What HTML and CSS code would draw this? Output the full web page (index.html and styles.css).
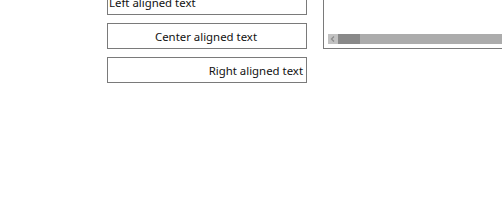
FILE: index.html
```html
<!DOCTYPE html>
<html>
<head>
<meta charset="UTF-8">
<title>Text alignment</title>
<link rel="stylesheet" href="styles.css">
</head>
<body>
<div class="page">
	<div class="fields">
		<div class="field field-left">Left aligned text</div>
		<div class="field field-center">Center aligned text</div>
		<div class="field field-right">Right aligned text</div>
	</div>
	<div class="panel">
		<div class="panel-body"></div>
		<div class="hscroll">
			<span class="hscroll-btn">
				<svg width="10" height="10" viewBox="0 0 10 10"><path d="M6 2.5 L3.5 5 L6 7.5" fill="none" stroke="#8c8c8c" stroke-width="1.3"/></svg>
			</span>
			<span class="hscroll-thumb"></span>
			<span class="hscroll-track"></span>
		</div>
	</div>
</div>
</body>
</html>
```

FILE: styles.css
```css
html,body{margin:0;padding:0;}
html,body{
	width:100%;
	height:100%;
	overflow:hidden;
	background:#fff;
}
body{font-family:"Segoe UI","Noto Sans","Liberation Sans",sans-serif;font-size:11.4px;color:#000;}

.page{
	display:flex;
	align-items:flex-start;
	gap:16px;
	margin-top:-11px;
	padding-left:107px;
}
.fields{
	flex:none;
	display:flex;
	flex-direction:column;
	gap:8px;
	width:200px;
}
.field{
	box-sizing:border-box;
	height:26px;
	border:1px solid #7a7a7a;
	line-height:24px;
	padding:1px 3px 0 1px;
	white-space:nowrap;
	color:#111;
}
.field-left{text-align:left;}
.field-center{text-align:center;}
.field-right{text-align:right;}

.panel{
	box-sizing:border-box;
	flex:none;
	width:180px;
	height:60px;
	border:1px solid #7a7a7a;
	border-right:0;
	padding:4px 0 4px 4px;
	display:flex;
	flex-direction:column;
}
.panel-body{flex:1;}
.hscroll{
	display:flex;
	height:10px;
	background:#acacac;
}
.hscroll-btn{
	width:10px;
	height:10px;
	background:#c2c2c2;
	display:block;
}
.hscroll-btn svg{display:block;}
.hscroll-thumb{
	width:22px;
	background:#898989;
}
.hscroll-track{flex:1;}
```
